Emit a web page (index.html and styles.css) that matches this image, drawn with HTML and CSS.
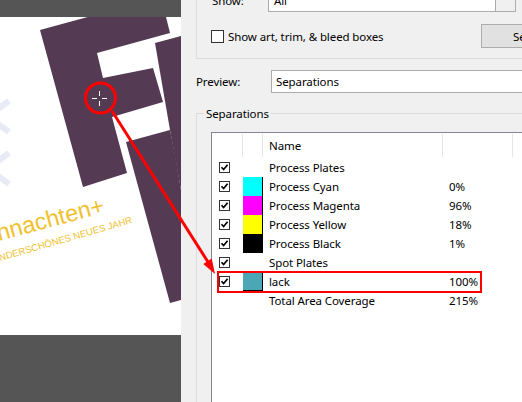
FILE: index.html
```html
<!DOCTYPE html>
<html>
<head>
<meta charset="utf-8">
<link rel="stylesheet" href="styles.css">
</head>
<body>
<div class="app">
  <div class="canvas">
    <div class="topbar"></div>
    <div class="doc">
      <svg class="art" viewBox="0 17 181 318" width="181" height="318">
        <g stroke="#e8eaf5" stroke-width="6" fill="none">
          <line x1="-2" y1="109" x2="9" y2="101"/>
          <line x1="-2" y1="124" x2="9" y2="132"/>
          <line x1="-2" y1="161" x2="9" y2="153"/>
          <line x1="-2" y1="176" x2="9" y2="184"/>
        </g>
        <g fill="#543a53">
          <polygon points="40,30 161,-3 170,33 97,53 103,78 153,68 163,102 112,117 127,173 83,187"/>
          <polygon points="155,43 181,36 181,190 170,130"/>
          <polygon points="126,142 170,130 176,160 181,190 181,300 170,303"/>
        </g>
        <text class="y1" x="-1" y="241" transform="rotate(-15 -1 241)">hnachten+</text>
        <text class="y2" x="0" y="261" transform="rotate(-16 0 261)">NDERSCHÖNES NEUES JAHR</text>
      </svg>
    </div>
    <div class="bottombar"></div>
  </div>

  <div class="panel">
    <div class="top-group">
      <div class="show-row">
        <span class="show-label">Show:</span>
        <div class="select">
          <span class="select-text">All</span>
          <span class="select-btn"><svg width="10" height="6" viewBox="0 0 10 6"><polyline points="1,1 5,5 9,1" fill="none" stroke="#333" stroke-width="1"/></svg></span>
        </div>
      </div>
      <div class="check-row">
        <span class="cb"></span>
        <span class="cb-label">Show art, trim, &amp; bleed boxes</span>
        <button class="btn">Set Page Background</button>
      </div>
    </div>

    <div class="preview-row">
      <span class="preview-label">Preview:</span>
      <div class="input">Separations</div>
    </div>

    <div class="sep-group">
      <div class="legend">Separations</div>
      <div class="list">
        <div class="lrow header">
          <div class="hcell"></div>
          <div class="hcell"></div>
          <div class="hcell name">Name</div>
          <div class="hcell"></div>
          <div class="hcell last"></div>
        </div>
        <div class="lrow">
          <div class="ccell"><span class="lcb"><svg viewBox="0 0 9 9" width="9" height="9"><polyline points="1.5,4.2 3.6,6.5 7.6,1.8" fill="none" stroke="#000" stroke-width="1.7"/></svg></span></div>
          <div></div>
          <div class="ncell">Process Plates</div>
          <div class="pcell"></div>
        </div>
        <div class="lrow">
          <div class="ccell"><span class="lcb"><svg viewBox="0 0 9 9" width="9" height="9"><polyline points="1.5,4.2 3.6,6.5 7.6,1.8" fill="none" stroke="#000" stroke-width="1.7"/></svg></span></div>
          <div class="swatch cyan"></div>
          <div class="ncell">Process Cyan</div>
          <div class="pcell">0%</div>
        </div>
        <div class="lrow">
          <div class="ccell"><span class="lcb"><svg viewBox="0 0 9 9" width="9" height="9"><polyline points="1.5,4.2 3.6,6.5 7.6,1.8" fill="none" stroke="#000" stroke-width="1.7"/></svg></span></div>
          <div class="swatch magenta"></div>
          <div class="ncell">Process Magenta</div>
          <div class="pcell">96%</div>
        </div>
        <div class="lrow">
          <div class="ccell"><span class="lcb"><svg viewBox="0 0 9 9" width="9" height="9"><polyline points="1.5,4.2 3.6,6.5 7.6,1.8" fill="none" stroke="#000" stroke-width="1.7"/></svg></span></div>
          <div class="swatch yellow"></div>
          <div class="ncell">Process Yellow</div>
          <div class="pcell">18%</div>
        </div>
        <div class="lrow">
          <div class="ccell"><span class="lcb"><svg viewBox="0 0 9 9" width="9" height="9"><polyline points="1.5,4.2 3.6,6.5 7.6,1.8" fill="none" stroke="#000" stroke-width="1.7"/></svg></span></div>
          <div class="swatch black"></div>
          <div class="ncell">Process Black</div>
          <div class="pcell">1%</div>
        </div>
        <div class="lrow">
          <div class="ccell"><span class="lcb"><svg viewBox="0 0 9 9" width="9" height="9"><polyline points="1.5,4.2 3.6,6.5 7.6,1.8" fill="none" stroke="#000" stroke-width="1.7"/></svg></span></div>
          <div></div>
          <div class="ncell">Spot Plates</div>
          <div class="pcell"></div>
        </div>
        <div class="lrow">
          <div class="ccell"><span class="lcb"><svg viewBox="0 0 9 9" width="9" height="9"><polyline points="1.5,4.2 3.6,6.5 7.6,1.8" fill="none" stroke="#000" stroke-width="1.7"/></svg></span></div>
          <div class="swatch teal"></div>
          <div class="ncell">lack</div>
          <div class="pcell">100%</div>
        </div>
        <div class="lrow">
          <div></div>
          <div></div>
          <div class="ncell">Total Area Coverage</div>
          <div class="pcell">215%</div>
        </div>
      </div>
    </div>
  </div>

  <svg class="annot" width="522" height="402" viewBox="0 0 522 402">
    <circle cx="100.5" cy="98" r="15" fill="none" stroke="#f00" stroke-width="3"/>
    <g stroke="#fff" stroke-width="1">
      <line x1="99.5" y1="91" x2="99.5" y2="96"/>
      <line x1="99.5" y1="101" x2="99.5" y2="106"/>
      <line x1="92" y1="98.5" x2="97" y2="98.5"/>
      <line x1="102" y1="98.5" x2="107" y2="98.5"/>
    </g>
    <line x1="112" y1="111" x2="208" y2="262" stroke="#f00" stroke-width="3"/>
    <polygon points="215,274 203.3,263.9 211.7,258.5" fill="#f00"/>
    <rect x="218" y="272" width="263" height="20" fill="none" stroke="#f00" stroke-width="2"/>
  </svg>
</div>
</body>
</html>
```

FILE: styles.css
```css
* { box-sizing: border-box; }
html, body { margin: 0; padding: 0; }
body {
  width: 522px;
  height: 402px;
  overflow: hidden;
  background: #f0f0f0;
  font-family: "Noto Sans", "Open Sans", sans-serif;
  font-size: 11.5px;
  letter-spacing: -0.1px;
  color: #000;
}
.app {
  position: relative;
  display: flex;
  width: 522px;
  height: 402px;
  overflow: hidden;
}
.canvas {
  width: 181px;
  flex: none;
  display: flex;
  flex-direction: column;
}
.topbar { height: 17px; background: #555555; flex: none; }
.doc { height: 318px; background: #fff; overflow: hidden; flex: none; }
.art { display: block; }
.y1 { font-family: "Liberation Sans", Arial, sans-serif; font-size: 23.5px; fill: #f0c12d; letter-spacing: 0; }
.y2 { font-family: "Liberation Sans", Arial, sans-serif; font-size: 9.6px; fill: #f0c12d; letter-spacing: 0; }
.bottombar { flex: 1; background: #555555; }

.panel {
  width: 341px;
  flex: none;
  background: #f0f0f0;
  padding-left: 15px;
  overflow: hidden;
}
.top-group {
  margin-top: -24px;
  width: 360px;
  height: 83px;
  border: 1px solid #dcdcdc;
  padding: 12px 0 0 15px;
}
.show-row { display: flex; align-items: center; height: 23px; }
.show-label { width: 56px; flex: none; }
.select {
  width: 248px;
  height: 23px;
  flex: none;
  display: flex;
  border: 1px solid #acacac;
  background: #fff;
}
.select-text { flex: 1; padding-left: 5px; line-height: 21px; }
.select-btn {
  width: 20px;
  flex: none;
  border-left: 1px solid #acacac;
  background: #f0f0f0;
  display: flex;
  align-items: flex-start;
  justify-content: center;
  padding-top: 1px;
}
.select-btn svg { display: block; }
.check-row { display: flex; align-items: center; height: 24px; margin-top: 12px; }
.cb {
  width: 13px;
  height: 13px;
  flex: none;
  margin-left: -1px;
  border: 1px solid #333;
  background: #fff;
}
.cb-label { width: 257px; flex: none; padding-left: 4px; white-space: nowrap; }
.btn {
  flex: none;
  width: 120px;
  height: 24px;
  border: 1px solid #adadad;
  background: #e1e1e1;
  padding: 0 0 0 31px;
  text-align: left;
  font: inherit;
  letter-spacing: inherit;
  color: #000;
  white-space: nowrap;
}

.preview-row { display: flex; align-items: center; height: 23px; margin-top: 11px; }
.preview-label { width: 75px; flex: none; }
.input {
  width: 300px;
  height: 23px;
  flex: none;
  border: 1px solid #acacac;
  background: #fff;
  padding-left: 4px;
  line-height: 21px;
}

.sep-group {
  margin-top: 20px;
  width: 360px;
  height: 400px;
  border: 1px solid #dcdcdc;
}
.legend {
  width: max-content;
  margin: -9px 0 0 7px;
  padding: 0 2px;
  background: #f0f0f0;
  line-height: 17px;
}
.list {
  margin: 10px 0 0 14px;
  width: 340px;
  height: 300px;
  border: 1px solid #828790;
  background: #fff;
}
.lrow {
  display: grid;
  grid-template-columns: 31px 20px 180px 70px 1fr;
  height: 19px;
  line-height: 19px;
  white-space: nowrap;
}
.lrow.header { height: 25px; line-height: 25px; }
.hcell { position: relative; }
.hcell::after {
  content: "";
  position: absolute;
  right: 0;
  top: 1px;
  bottom: 1px;
  width: 1px;
  background: #e5e5e5;
}
.hcell.last::after { display: none; }
.name { padding-left: 6px; }
.ncell { padding-left: 6px; }
.pcell { padding-left: 6px; }
.ccell { padding: 4px 0 0 7px; }
.lcb {
  display: block;
  width: 11px;
  height: 11px;
  border: 1px solid #333;
  background: #fff;
}
.lcb svg { display: block; }
.swatch { border-right: 1px solid #000; }
.swatch.cyan { background: #00ffff; }
.swatch.magenta { background: #ff00ff; }
.swatch.yellow { background: #ffff00; }
.swatch.black { background: #000; }
.swatch.teal { background: #4ba6b6; border-bottom: 1px solid #000; }

.annot {
  position: absolute;
  left: 0;
  top: 0;
  pointer-events: none;
}
```
